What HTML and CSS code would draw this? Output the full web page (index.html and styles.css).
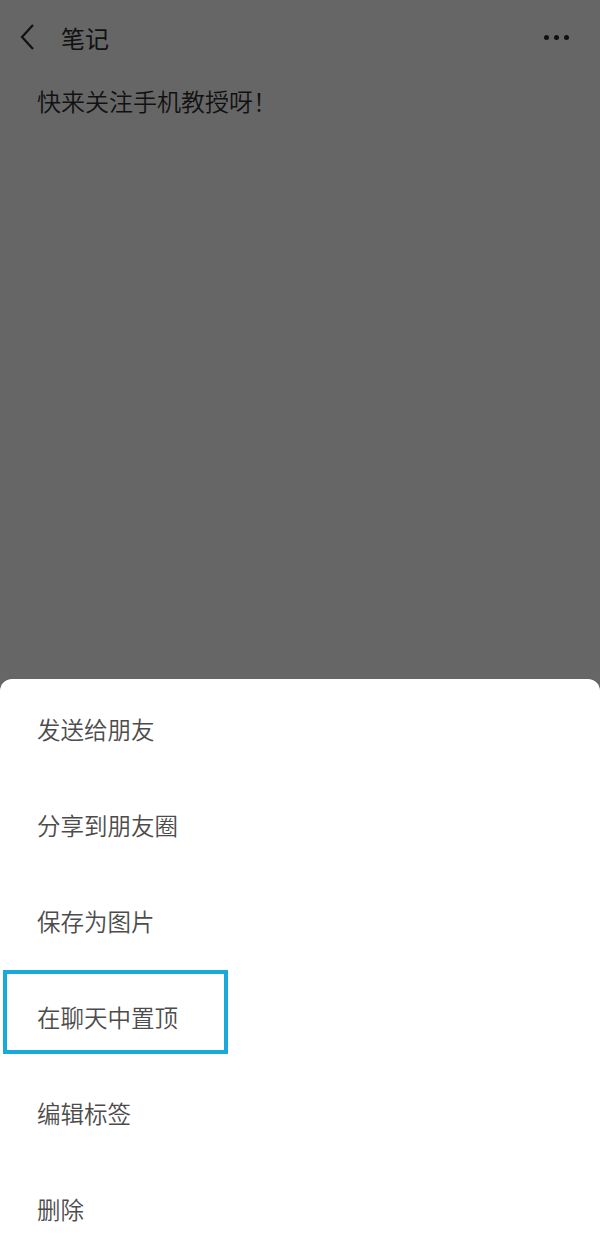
FILE: index.html
```html
<!DOCTYPE html>
<html lang="zh-CN">

<head>
    <meta charset="UTF-8">
    <meta name="viewport" content="width=device-width, initial-scale=1.0">
    <title>笔记</title>
    <link rel="stylesheet" href="styles.css">
</head>

<body>
    <div class="page">
        <header class="topbar">
            <div class="topbar-left">
                <svg class="back" width="16" height="28" viewBox="0 0 16 28">
                    <path d="M13 2 L2 14 L13 26" fill="none" stroke="#111" stroke-width="2.2" />
                </svg>
                <h1>笔记</h1>
            </div>
            <div class="more">
                <span></span><span></span><span></span>
            </div>
        </header>
        <p class="note">快来关注手机教授呀！</p>
    </div>

    <ul class="sheet">
        <li>发送给朋友</li>
        <li>分享到朋友圈</li>
        <li>保存为图片</li>
        <li class="marked">在聊天中置顶<span class="mark"></span></li>
        <li>编辑标签</li>
        <li>删除</li>
    </ul>
</body>

</html>
```

FILE: styles.css
```css
body {
    font-family: "Noto Sans CJK SC", "Noto Sans", sans-serif;
    margin: 0;
    padding: 0;
    width: 600px;
    height: 1257px;
    background-color: #666666;
    display: flex;
    flex-direction: column;
    overflow: hidden;
}

.page {
    flex: 1;
}

.topbar {
    height: 74px;
    display: flex;
    align-items: center;
    justify-content: space-between;
    padding: 0 31px 0 20px;
}

.topbar-left {
    display: flex;
    align-items: center;
    gap: 25px;
}

.topbar h1 {
    margin: 0;
    font-size: 24px;
    font-weight: 400;
    color: #111;
}

.more {
    display: flex;
    gap: 5px;
}

.more span {
    width: 5px;
    height: 5px;
    border-radius: 50%;
    background: #111;
}

.note {
    margin: 0;
    padding: 11px 37px;
    font-size: 24px;
    line-height: 32px;
    font-weight: 350;
    color: #111;
}

.sheet {
    list-style: none;
    margin: 0;
    padding: 2px 0 0;
    height: 576px;
    background: #fff;
    border-radius: 12px 12px 0 0;
}

.sheet li {
    height: 96px;
    display: flex;
    align-items: center;
    padding-left: 37px;
    font-size: 23.5px;
    font-weight: 350;
    color: #4c4c4c;
    position: relative;
}

.mark {
    position: absolute;
    left: 3px;
    top: 1px;
    width: 217px;
    height: 76px;
    border: 4px solid #1aa9dd;
}
```
